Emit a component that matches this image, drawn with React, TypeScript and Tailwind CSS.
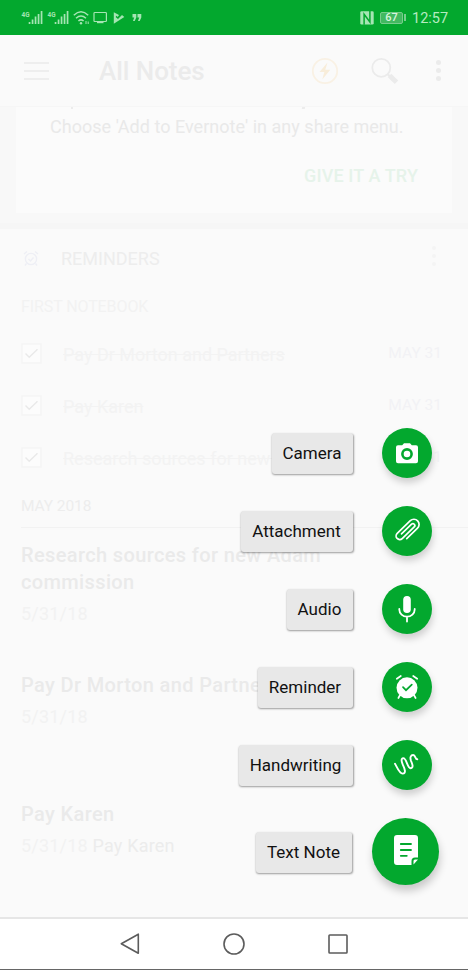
import type { ReactNode } from 'react';

const reminders = [
	{ title: 'Pay Dr Morton and Partners', date: 'MAY 31' },
	{ title: 'Pay Karen', date: 'MAY 31' },
	{ title: 'Research sources for new Adam...', date: 'MAY 31' },
];

function SignalIcon() {
	return (
		<svg width="22" height="15" viewBox="0 0 22 15" fill="currentColor">
			<text x="0.5" y="6.5" fontSize="7.5" fontWeight="700" fontFamily="Roboto, sans-serif" textLength="8" lengthAdjust="spacingAndGlyphs">4G</text>
			<rect x="7.7" y="12" width="1.7" height="2" />
			<rect x="10.7" y="9.5" width="1.7" height="4.5" />
			<rect x="13.7" y="6.5" width="1.7" height="7.5" />
			<rect x="16.7" y="4" width="1.7" height="10" />
			<rect x="19.7" y="1" width="1.7" height="13" />
		</svg>
	);
}

function StatusBar() {
	return (
		<div className="flex h-[35px] shrink-0 items-center justify-between bg-[#03a82e] pl-[21px] pr-5 text-[#a5e5b3]">
			<div className="flex items-center">
				<SignalIcon />
				<div className="ml-1"><SignalIcon /></div>
				<svg className="ml-[4px]" width="17" height="15" viewBox="0 0 17 15" fill="none" stroke="currentColor" strokeWidth="1.5">
					<path d="M.8 5.2Q8 -1.6 15.2 5.2M3 8.2Q8 3.8 13 8.2M5.4 11Q8 8.8 10.6 11" />
					<circle cx="8" cy="13.2" r="1.2" fill="currentColor" stroke="none" />
					<path d="M13 11v3M15.2 11.5v2.5" strokeWidth="1" />
				</svg>
				<svg className="ml-[3px]" width="15" height="13" viewBox="0 0 15 13" fill="none" stroke="currentColor" strokeWidth="1.2">
					<rect x="1" y="1.5" width="12.4" height="9" rx=".8" />
					<path d="M4 11.6h6.5" />
				</svg>
				<svg className="ml-[5px]" width="12" height="12" viewBox="0 0 12 12" fill="currentColor">
					<path d="M.8.3 6 3.1 4.8 4.9 3.6 3.8l-1 1.1L5 7.1l4-4 2.3 2L.8 11.8z" />
				</svg>
				<svg className="ml-[7px]" width="10" height="9" viewBox="0 0 10 9" fill="currentColor">
					<path d="M.5 1H4.3V4.6L2.7 8H1L2.2 4.6H.5zM5.5 1H9.3V4.6L7.7 8H6L7.2 4.6H5.5z" />
				</svg>
			</div>
			<div className="flex items-center">
				<svg width="14" height="14" viewBox="0 0 14 14" fill="none">
					<rect x=".3" y=".3" width="13.4" height="13.2" rx="1.3" fill="currentColor" />
					<path d="M4.1 13.8V3.2L9.9 11V0" stroke="#03a82e" strokeWidth="1.5" />
				</svg>
				<div className="ml-[6px] flex h-3 w-[23px] items-center justify-center rounded-[2px] border border-[#77cd8c] bg-[#42b960] font-['Roboto'] text-[11px] font-medium leading-none text-[#d8f5df]">67</div>
				<div className="ml-px h-[7px] w-[2px] bg-[#77cd8c]" />
				<span className="ml-[6px] mt-[3px] w-[36px] whitespace-nowrap text-[14.5px] leading-none text-[#b5ebc0]">12:57</span>
			</div>
		</div>
	);
}

function Header() {
	return (
		<header className="flex h-[72px] shrink-0 items-center border-b border-[#f6f6f6] pl-6 text-[#ececec]">
			<div className="flex w-[25px] flex-col gap-[6px]">
				<div className="h-[2px] bg-[#eeeeee]" />
				<div className="h-[2px] bg-[#eeeeee]" />
				<div className="h-[2px] bg-[#eeeeee]" />
			</div>
			<h1 className="ml-[50px] w-[212px] text-[26px] font-medium leading-none tracking-[-0.05px] text-[#ebebeb]">All Notes</h1>
			<svg width="28" height="28" viewBox="0 0 28 28">
				<circle cx="14" cy="14" r="12.2" fill="none" stroke="#f9f1e4" strokeWidth="1.8" />
				<path d="M16.5 5.5 8.5 15h4.8l-2 7.5 8-9.7h-5z" fill="#f8edda" />
			</svg>
			<svg className="ml-[32px]" width="28" height="28" viewBox="0 0 28 28" fill="none" stroke="#ebebeb">
				<circle cx="10.3" cy="10.8" r="9" strokeWidth="1.8" />
				<path d="M16.7 17.2 19 19.5" strokeWidth="2.2" />
				<path d="m18.5 18.5 7 6.8" strokeWidth="5" />
			</svg>
			<div className="ml-[37px] flex flex-col gap-[3px]">
				<div className="size-[5px] rounded-full bg-[#ebebeb]" />
				<div className="size-[5px] rounded-full bg-[#ebebeb]" />
				<div className="size-[5px] rounded-full bg-[#ebebeb]" />
			</div>
		</header>
	);
}

function ShareCard() {
	return (
		<section className="h-[122px] shrink-0 border-b-[6px] border-[#f6f6f6] bg-[#f8f8f8] px-4 pb-[10px]">
			<div className="flex h-full flex-col bg-[#fbfbfb]">
				<div className="flex h-[3px] items-start justify-between pl-[55px] pr-[147px]">
					<div className="h-[2px] w-[2px] bg-[#ececec]" />
					<div className="h-[2px] w-[3px] -skew-x-12 bg-[#ececec]" />
				</div>
				<p className="ml-[34px] mt-[6px] whitespace-nowrap text-[18px] leading-[22px] tracking-[0.03px] text-[#e9e9e9]">Choose 'Add to Evernote' in any share menu.</p>
				<button className="mr-[34px] mt-[27px] self-end whitespace-nowrap text-[18px] font-medium leading-[22px] tracking-[0.12px] text-[#e6f3ea]">GIVE IT A TRY</button>
			</div>
		</section>
	);
}

function Reminders() {
	return (
		<section className="flex h-[257px] shrink-0 flex-col pl-[21px] pr-[26px] pt-px">
			<div className="flex h-[58px] items-center">
				<svg width="20" height="18" viewBox="0 0 20 18" fill="none" stroke="#eeeff5" strokeWidth="1.4">
					<circle cx="10" cy="9" r="5.6" />
					<path d="m3 4 3-2.5M17 4l-3-2.5M5.5 13.5 4 15.5M14.5 13.5l1.5 2M7.5 9l2 2 3-3.5" />
				</svg>
				<h2 className="ml-[20px] flex-1 text-[18px] leading-none text-[#ededed]">REMINDERS</h2>
				<div className="mb-[6px] mr-[6px] flex flex-col gap-1">
					<div className="size-1 rounded-full bg-[#f4f4f4]" />
					<div className="size-1 rounded-full bg-[#f4f4f4]" />
					<div className="size-1 rounded-full bg-[#f4f4f4]" />
				</div>
			</div>
			<h3 className="flex h-[38px] items-center text-[16px] tracking-[-0.1px] text-[#f2f2f2]">FIRST NOTEBOOK</h3>
			<ul className="pt-px">
				{reminders.map((r) => (
					<li key={r.title} className="flex h-[52px] items-center">
						<svg className="shrink-0" width="21" height="21" viewBox="0 0 21 21" fill="none">
							<rect x="1" y="1" width="19" height="19" fill="#fcfcfc" stroke="#f5f5f5" strokeWidth="1.5" />
							<path d="m4.5 10.5 3.7 3.7 8.3-8" stroke="#e9e9e9" strokeWidth="1.4" />
						</svg>
						<span className="ml-[21px] mt-[2px] whitespace-nowrap text-[18px] text-[#f3f3f3] line-through">{r.title}</span>
						<span className="ml-auto mt-px whitespace-nowrap text-[15.5px] text-[#f2f2f5]">{r.date}</span>
					</li>
				))}
			</ul>
		</section>
	);
}

function Note({ title, date, snippet, className }: { title: string; date: string; snippet?: string; className: string }) {
	return (
		<article className={className}>
			<h3 className="w-[330px] text-[20px] font-medium leading-[27px] tracking-[0.37px] text-[#eaeaea]">{title}</h3>
			<p className="mt-[6px] text-[18px] leading-[24px] tracking-[0.2px] text-[#f2f2f2]">
				{date} {snippet && <span className="text-[#ececec]">{snippet}</span>}
			</p>
		</article>
	);
}

function NoteList() {
	return (
		<section className="flex-1 pl-[21px]">
			<h2 className="flex h-[42px] items-center border-b border-[#f2f2f2] text-[15.5px] tracking-[-0.1px] text-[#ededed]">MAY 2018</h2>
			<Note title="Research sources for new Adam commission" date="5/31/18" className="h-[130px] pt-[14px]" />
			<Note title="Pay Dr Morton and Partners" date="5/31/18" className="h-[130px] pt-[14px]" />
			<Note title="Pay Karen" date="5/31/18" snippet="Pay Karen" className="pt-[13px]" />
		</section>
	);
}

function ActionLabel({ children, className }: { children: ReactNode; className: string }) {
	return (
		<span className={`flex h-[41px] items-center justify-center whitespace-nowrap rounded-[3px] bg-[#e8e8e8] pr-px pt-[2px] text-[17px] text-[#111] shadow-[0.5px_1px_2px_rgba(0,0,0,0.38)] ${className}`}>
			{children}
		</span>
	);
}

function Action({ label, labelClass, children }: { label: string; labelClass: string; children: ReactNode }) {
	return (
		<div className="flex h-[78px] items-center gap-[29px]">
			<ActionLabel className={labelClass}>{label}</ActionLabel>
			<button className="flex size-[50px] items-center justify-center rounded-full bg-[#03a82e] text-white shadow-[1px_5px_7px_rgba(0,0,0,0.17)]">
				{children}
			</button>
		</div>
	);
}

function ActionMenu() {
	return (
		<div className="absolute right-[29px] top-[414px] flex flex-col items-end">
			<div className="mr-[7px] flex flex-col items-end">
				<Action label="Camera" labelClass="w-[81px]">
					<svg width="24" height="24" viewBox="0 0 24 24" fill="none">
						<path d="M3 4.2h4.2L9 2.2h6l1.8 2H21q2 0 2 2v14q0 2-2 2H3q-2 0-2-2v-14q0-2 2-2z" fill="white" />
						<circle cx="12" cy="13" r="4.6" fill="white" stroke="#03a82e" strokeWidth="2.6" />
					</svg>
				</Action>
				<Action label="Attachment" labelClass="w-[112px]">
					<svg width="30" height="30" viewBox="0 0 30 30" fill="none" stroke="white" strokeWidth="1.7" strokeLinecap="round">
						<path transform="rotate(46 15 15)" d="M20.3 20.5V5.5a5.2 5.2 0 0 0-10.4 0v18.2a3.6 3.6 0 0 0 7.2 0V7a1.9 1.9 0 0 0-3.8 0v14" />
					</svg>
				</Action>
				<Action label="Audio" labelClass="w-[66px]">
					<svg width="20" height="28" viewBox="0 0 20 28" fill="none" stroke="white" strokeWidth="1.8" strokeLinecap="round">
						<rect x="6.2" y="1" width="7.6" height="17" rx="3.8" fill="white" stroke="none" />
						<path d="M2.3 14v.5a7.7 7.2 0 0 0 15.4 0V14M10 22v4.5" />
					</svg>
				</Action>
				<Action label="Reminder" labelClass="w-[95px]">
					<svg width="26" height="26" viewBox="0 0 26 26" fill="none" stroke="white" strokeWidth="1.7" strokeLinecap="round">
						<circle cx="13" cy="13.8" r="10.5" fill="white" stroke="none" />
						<path d="M2.8 4.8 6.8 2M23.2 4.8 19.2 2M5.8 21.5 4.4 24M20.2 21.5l1.4 2.5" />
						<path d="m9 13.2 3 3 5.8-5.6" stroke="#03a82e" />
					</svg>
				</Action>
				<Action label="Handwriting" labelClass="w-[114px]">
					<svg width="26" height="24" viewBox="0 0 26 24" fill="none" stroke="white" strokeWidth="1.9" strokeLinecap="round" strokeLinejoin="round">
						<path d="M1 10.8C3 14 5.2 20.6 8.6 20.6 12.6 20.4 10.6 15.5 9 12.2 7.6 8.8 6.6 5.4 9.3 5.1 12.6 5 13.2 15 16.6 15.2 20 15 18.2 10.6 17 7.8 15.8 4.6 16.6 2 19.2 2 21.6 2 21.2 6.6 23.3 6.3" />
					</svg>
				</Action>
			</div>
			<div className="mt-[13px] flex h-[68px] items-center gap-5">
				<ActionLabel className="mt-[2px] w-[96px]">Text Note</ActionLabel>
				<button className="flex size-[67px] items-center justify-center rounded-full bg-[#03a82e] shadow-[1px_6px_9px_rgba(0,0,0,0.2)]">
					<svg className="mb-[2px]" width="24" height="30" viewBox="0 0 24 30" fill="none">
						<path d="M3 0h18q3 0 3 3v19.5h-3q-3.5 0-3.5 3.5v4H3q-3 0-3-3V3q0-3 3-3z" fill="white" />
						<path d="M19.5 29.5V26q0-1.5 1.5-1.5h3z" fill="white" />
						<path d="M6.8 9h10.2M6.8 15h10.2M6.8 20.8h6" stroke="#03a82e" strokeWidth="1.8" strokeLinecap="round" />
					</svg>
				</button>
			</div>
		</div>
	);
}

function NavBar() {
	return (
		<nav className="flex h-[53px] shrink-0 items-center justify-center gap-[83px] border-b border-t-2 border-b-[#666] border-t-[#e6e6e6] bg-white text-[#5c5c5c]">
			<svg width="20" height="22" viewBox="0 0 20 22" fill="none" stroke="currentColor" strokeWidth="1.6" strokeLinejoin="round">
				<path d="M18.3 1.2v19L1.3 10.7z" />
			</svg>
			<svg width="22" height="22" viewBox="0 0 22 22" fill="none" stroke="currentColor" strokeWidth="1.6">
				<circle cx="11" cy="11" r="10" />
			</svg>
			<svg width="20" height="20" viewBox="0 0 20 20" fill="none" stroke="currentColor" strokeWidth="1.6">
				<rect x="1" y="1" width="18" height="18" rx=".8" />
			</svg>
		</nav>
	);
}

export default function App() {
	return (
		<div className="relative flex h-[970px] w-[468px] flex-col overflow-hidden bg-[#fafafa] font-['Roboto',sans-serif]">
			<StatusBar />
			<Header />
			<ShareCard />
			<Reminders />
			<NoteList />
			<NavBar />
			<ActionMenu />
		</div>
	);
}
